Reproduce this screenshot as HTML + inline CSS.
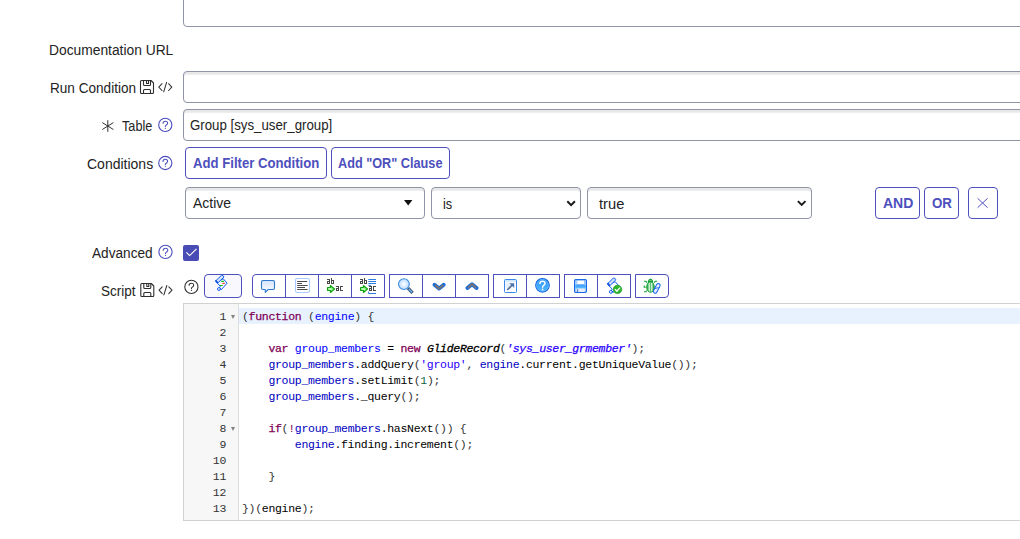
<!DOCTYPE html>
<html><head><meta charset="utf-8">
<style>
*{box-sizing:border-box;margin:0;padding:0}
html,body{width:1020px;height:539px;overflow:hidden;background:#fff}
body{position:relative;font-family:"Liberation Sans",sans-serif;font-size:14px;color:#232323}
.abs{position:absolute}
.lbl{position:absolute;white-space:nowrap;font-size:14px;line-height:16px;color:#232323}
.inp{position:absolute;left:183px;width:860px;height:32px;border:1px solid #9094a6;border-radius:4px;background:#fff;box-shadow:inset 0 2px 0 #e8e8e9,inset 0 3px 0 #eeeeef;font-size:14px;line-height:16px;white-space:nowrap}
.inp span,.sel span,.btn span{position:absolute;white-space:nowrap}
.btn{position:absolute;height:32px;border:1px solid #4d50bd;border-radius:4px;color:#4d50bd;font-weight:bold;font-size:14px;line-height:16px;background:#fff}
.sel{position:absolute;height:32px;border:1px solid #9094a6;border-radius:4px;background:#fff;box-shadow:inset 0 2px 0 #e8e8e9,inset 0 3px 0 #eeeeef;font-size:14px;line-height:16px}
svg{position:absolute;overflow:visible}
.tb{position:absolute;top:274px;height:24px;border:1px solid #4d50bd;background:#fff}
.tbd{position:absolute;top:274px;height:24px;width:1px;background:#4d50bd}
#ed{position:absolute;left:183px;top:303px;width:860px;height:218px;border:1px solid #d1d1d1;background:#fff}
#gut{position:absolute;left:0;top:0;width:55px;height:216px;background:#f7f7f7;border-right:1px solid #ddd}
#al{position:absolute;left:55px;top:4px;width:810px;height:16px;background:#e8f2ff}
.ln{position:absolute;left:0;width:42px;margin-top:1px;text-align:right;font-family:"Liberation Mono",monospace;font-size:11.5px;letter-spacing:-0.3px;line-height:16px;color:#333}
.cl{position:absolute;left:58px;margin-top:1px;font-family:"Liberation Mono",monospace;font-size:11.5px;letter-spacing:-0.3px;line-height:16px;white-space:pre;color:#000}
.k{color:#7f0055;-webkit-text-stroke:0.25px #7f0055}.f{color:#00f}.v{color:#0000c0}.s{color:#2a00ff}.p{color:#333}
.gi{font-style:italic;-webkit-text-stroke:0.3px #000}.si{font-style:italic;color:#2a00ff;-webkit-text-stroke:0.25px #2a00ff}
.fold{position:absolute;left:46.5px;margin-top:0.2px;width:0;height:0;border-left:2.6px solid transparent;border-right:2.6px solid transparent;border-top:4px solid #808080}
</style></head><body>
<!-- top textarea bottom -->
<div class="abs" style="left:183px;top:-10px;width:860px;height:37px;border:1px solid #9094a6;border-radius:4px"></div>

<div class="lbl" id="l1" style="transform:scaleX(0.986);transform-origin:0 0;left:49px;top:42px">Documentation URL</div>
<div class="lbl" id="l2" style="transform:scaleX(0.97);transform-origin:0 0;left:50px;top:80px">Run Condition</div>
<div class="inp" style="top:71px"></div>
<div class="lbl" id="l3" style="transform:scaleX(0.906);transform-origin:0 0;left:122px;top:118px">Table</div>
<div class="inp" style="top:109px"><span id="t1" style="transform:scaleX(0.947);transform-origin:0 0;left:6px;top:7px">Group [sys_user_group]</span></div>
<div class="lbl" id="l4" style="left:87px;top:156px">Conditions</div>

<div class="btn" style="left:185px;top:147px;width:142px"><span id="b1" style="transform:scaleX(0.939);transform-origin:0 0;left:7px;top:7px">Add Filter Condition</span></div>
<div class="btn" style="left:331px;top:147px;width:119px"><span id="b2" style="transform:scaleX(0.907);transform-origin:0 0;left:6px;top:7px">Add "OR" Clause</span></div>

<div class="sel" style="left:185px;top:187px;width:240px"><span id="s1" style="left:7px;top:7px">Active</span></div>
<div class="sel" style="left:431px;top:187px;width:150px"><span id="s2" style="transform:scaleX(0.91);transform-origin:0 0;left:11px;top:8px">is</span></div>
<div class="sel" style="left:587px;top:187px;width:225px"><span id="s3" style="transform:scaleX(1.05);transform-origin:0 0;left:11px;top:8px">true</span></div>
<div class="btn" style="left:875px;top:187px;width:45px"><span id="b3" style="left:7px;top:7px">AND</span></div>
<div class="btn" style="left:924px;top:187px;width:35px"><span id="b4" style="transform:scaleX(0.95);transform-origin:0 0;left:7px;top:7px">OR</span></div>
<div class="btn" style="left:968px;top:187px;width:30px"></div>

<div class="lbl" id="l5" style="transform:scaleX(0.974);transform-origin:0 0;left:92px;top:245px">Advanced</div>
<div class="abs" style="left:183px;top:245px;width:16px;height:16px;background:#4a4cb5;border-radius:2px"></div>
<div class="lbl" id="l6" style="transform:scaleX(0.964);transform-origin:0 0;left:101px;top:283px">Script</div>

<!-- toolbar -->
<div class="tb" style="left:204px;width:38px;border-radius:4px;background:#f9f9fd"></div>
<div class="tb" style="left:252px;width:133px;border-radius:4px 0 0 4px"></div>
<div class="tbd" style="left:285px"></div><div class="tbd" style="left:318px"></div><div class="tbd" style="left:351px"></div>
<div class="tb" style="left:389px;width:100px"></div>
<div class="tbd" style="left:422px"></div><div class="tbd" style="left:455px"></div>
<div class="tb" style="left:493px;width:67px"></div>
<div class="tbd" style="left:526px"></div>
<div class="tb" style="left:564px;width:67px"></div>
<div class="tbd" style="left:597px"></div>
<div class="tb" style="left:635px;width:34px;border-radius:0 4px 4px 0"></div>

<!-- editor -->
<div id="ed"><div id="al"></div><div id="gut"></div>
<div class="ln" style="top:4px">1</div><div class="cl" style="top:4px"><span class="p">(</span><span class="k">function</span> <span class="p">(</span><span class="f">engine</span><span class="p">) {</span></div>
<div class="fold" style="top:11px"></div>
<div class="ln" style="top:20px">2</div><div class="cl" style="top:20px"></div>
<div class="ln" style="top:36px">3</div><div class="cl" style="top:36px">    <span class="k">var</span> <span class="f">group_members</span> = <span class="k">new</span> <span class="gi">GlideRecord</span><span class="p">(</span><span class="si">'sys_user_grmember'</span><span class="p">);</span></div>
<div class="ln" style="top:52px">4</div><div class="cl" style="top:52px">    <span class="v">group_members</span>.addQuery<span class="p">(</span><span class="s">'group'</span><span class="p">,</span> <span class="v">engine</span>.current.getUniqueValue<span class="p">());</span></div>
<div class="ln" style="top:68px">5</div><div class="cl" style="top:68px">    <span class="v">group_members</span>.setLimit<span class="p">(</span><span style="color:#164">1</span><span class="p">);</span></div>
<div class="ln" style="top:84px">6</div><div class="cl" style="top:84px">    <span class="v">group_members</span>._query<span class="p">();</span></div>
<div class="ln" style="top:100px">7</div><div class="cl" style="top:100px"></div>
<div class="ln" style="top:116px">8</div><div class="cl" style="top:116px">    <span class="k">if</span><span class="p">(</span><span style="color:#7f0055">!</span><span class="v">group_members</span>.hasNext<span class="p">()) {</span></div>
<div class="fold" style="top:123px"></div>
<div class="ln" style="top:132px">9</div><div class="cl" style="top:132px">        <span class="v">engine</span>.finding.increment<span class="p">();</span></div>
<div class="ln" style="top:148px">10</div><div class="cl" style="top:148px"></div>
<div class="ln" style="top:164px">11</div><div class="cl" style="top:164px">    <span class="p">}</span></div>
<div class="ln" style="top:180px">12</div><div class="cl" style="top:180px"></div>
<div class="ln" style="top:196px">13</div><div class="cl" style="top:196px"><span class="p">})(</span>engine<span class="p">);</span></div>
</div>
<!--ICONS_START--><svg id="ov" width="1020" height="539" viewBox="0 0 1020 539" style="left:0;top:0">
<defs>
<linearGradient id="gb" x1="0" y1="0" x2="0" y2="1"><stop offset="0" stop-color="#d3e4f8"/><stop offset="1" stop-color="#ffffff"/></linearGradient>
<radialGradient id="gm" cx="0.5" cy="0.5" r="0.6"><stop offset="0" stop-color="#ffffff"/><stop offset="1" stop-color="#a9d2ff"/></radialGradient>
<linearGradient id="gh" x1="0" y1="0" x2="0" y2="1"><stop offset="0" stop-color="#2a92fa"/><stop offset="1" stop-color="#4fbaff"/></linearGradient>
<linearGradient id="gs" x1="0" y1="0" x2="0" y2="1"><stop offset="0" stop-color="#3a9dff"/><stop offset="1" stop-color="#62c0ff"/></linearGradient>
<linearGradient id="gg" x1="0" y1="0" x2="1" y2="0"><stop offset="0" stop-color="#0a9a2a"/><stop offset="0.4" stop-color="#d8f8dc"/><stop offset="0.6" stop-color="#d8f8dc"/><stop offset="1" stop-color="#0a9a2a"/></linearGradient>
<g id="floppy" fill="none" stroke="#2e2e2e" stroke-width="1.1" stroke-linejoin="round">
<path d="M0.5 1.5 Q0.5 0.5 1.5 0.5 H11 L13.5 3 V12.5 Q13.5 13.5 12.5 13.5 H1.5 Q0.5 13.5 0.5 12.5 Z"/>
<path d="M3.5 0.5 V4.5 Q3.5 5.5 4.5 5.5 H9.5 Q10.5 5.5 10.5 4.5 V0.5"/>
<path d="M6.5 0.5 V3.5 H8.5 V0.5"/>
<path d="M3.5 13.5 V10.5 Q3.5 9.5 4.5 9.5 H9.5 Q10.5 9.5 10.5 10.5 V13.5"/>
</g>
<g id="code" fill="none" stroke="#333" stroke-width="1.05" stroke-linecap="round" stroke-linejoin="round">
<path d="M3.7 1.5 L0.5 4.9 L3.7 8.3"/><path d="M8.3 0.2 L5.4 9.6"/><path d="M10.3 1.5 L13.5 4.9 L10.3 8.3"/>
</g>
<g id="help" fill="none" stroke-width="1.1">
<circle cx="0" cy="0" r="6.6"/>
<path d="M-2.3 -1.6 Q-2.2 -3.7 0 -3.7 Q2.3 -3.7 2.3 -1.7 Q2.3 -0.5 1 0.2 Q0 0.8 0 1.7" stroke-linecap="round"/>
<circle cx="0" cy="3.5" r="0.55" stroke="none" fill="currentColor"/>
</g>
<g id="scroll" fill="none" stroke="#1560f2" stroke-width="1" stroke-linejoin="round" stroke-linecap="round">
<path d="M1.7 7.4 L5.8 11.7 L5.1 13 L6.7 15.2 L12.5 8.6 L9.1 4.6 Z" fill="#f6f9ff"/>
<path d="M1.5 6 L6.9 0.8 Q8.9 0.3 9.5 2.4 L3.5 8.2 Q1.5 8.4 1.5 6 Z" fill="#d3e3fb"/>
<path d="M1.6 6.3 L2.9 7.9" stroke="#0f4fe0" stroke-width="1.6"/>
<circle cx="4.5" cy="14.4" r="1.5" fill="#eef3ff"/>
</g>
<g id="garrow"><path d="M0.5 2.6 H3.4 V0.5 L7.6 4 L3.4 7.5 V5.4 H0.5 Z" fill="#7af07a" stroke="#12a512" stroke-width="1.1" stroke-linejoin="round"/><path d="M1.4 3.6 H4.3 M1.4 4.3 H5.2" fill="none" stroke="#d8ffd0" stroke-width="0.8"/></g>
</defs>
<!-- label icons -->
<use href="#floppy" x="140" y="80"/><use href="#code" x="158.3" y="82.2"/>
<use href="#floppy" x="140.3" y="283"/><use href="#code" x="158.5" y="285.3"/>
<g stroke="#333" stroke-width="1" fill="none"><path d="M107.8 120.2 V131.8 M102.3 122.6 L113.4 129.5 M102.3 129.5 L113.4 122.6"/></g>
<g color="#4c4fbe" stroke="#4c4fbe"><use href="#help" x="165.3" y="124.9"/><use href="#help" x="165.3" y="163"/><use href="#help" x="165.5" y="251.9"/></g>
<g color="#333" stroke="#333"><use href="#help" x="191.4" y="286.9"/></g>
<!-- selects -->
<path d="M404 200 H412.4 L408.2 205.4 Z" fill="#111"/>
<path d="M567.3 201.3 L571.1 205.1 L574.9 201.3" fill="none" stroke="#1a1a1a" stroke-width="2"/>
<path d="M797.9 201.1 L801.7 204.9 L805.5 201.1" fill="none" stroke="#1a1a1a" stroke-width="2"/>
<path d="M977.6 198.3 L987.6 207.7 M987.6 198.3 L977.6 207.7" stroke="#4d50bd" stroke-width="1" fill="none"/>
<path d="M186.4 252.4 L189.6 255.6 L196.5 248.9" stroke="#fff" stroke-width="1.1" fill="none"/>
<!-- toolbar icons -->
<use href="#scroll" x="214.5" y="274.6"/>
<path d="M221.2 281.4 h2.8 M220 285.5 h2.8" stroke="#19c219" stroke-width="1.1"/><path d="M222.3 283.4 h2.5" stroke="#f03a1a" stroke-width="1.1"/>
<!-- comment -->
<path d="M263 280.5 H273 Q274.5 280.5 274.5 282 V288 Q274.5 289.5 273 289.5 H268.2 L265.3 292.4 L265.3 289.5 H263 Q261.5 289.5 261.5 288 V282 Q261.5 280.5 263 280.5 Z" fill="url(#gb)" stroke="#2b78d0" stroke-width="1.1" stroke-linejoin="round"/>
<!-- align -->
<rect x="295.5" y="278.5" width="14" height="14" rx="1.8" fill="#fff" stroke="#a9c9ff" stroke-width="1.1"/>
<path d="M297.2 281.5 H307.2 M297.2 283.5 H302 M297.2 285.5 H307.6 M297.2 287.5 H305 M297.2 289.5 H307.6" stroke="#4a4a4a" stroke-width="1"/>
<!-- ab ac -->
<path d="M327 279h1v1h-1zM328 279h1v1h-1zM329 279h1v1h-1zM329 280h1v1h-1zM327 281h1v1h-1zM328 281h1v1h-1zM329 281h1v1h-1zM327 282h1v1h-1zM329 282h1v1h-1zM327 283h1v1h-1zM328 283h1v1h-1zM329 283h1v1h-1zM331 278h1v1h-1zM331 279h1v1h-1zM331 280h1v1h-1zM332 280h1v1h-1zM333 280h1v1h-1zM331 281h1v1h-1zM333 281h1v1h-1zM331 282h1v1h-1zM333 282h1v1h-1zM331 283h1v1h-1zM332 283h1v1h-1zM333 283h1v1h-1zM336 286h1v1h-1zM337 286h1v1h-1zM338 286h1v1h-1zM338 287h1v1h-1zM336 288h1v1h-1zM337 288h1v1h-1zM338 288h1v1h-1zM336 289h1v1h-1zM338 289h1v1h-1zM336 290h1v1h-1zM337 290h1v1h-1zM338 290h1v1h-1zM340 286h1v1h-1zM341 286h1v1h-1zM342 286h1v1h-1zM340 287h1v1h-1zM340 288h1v1h-1zM340 289h1v1h-1zM340 290h1v1h-1zM341 290h1v1h-1zM342 290h1v1h-1zM360 279h1v1h-1zM361 279h1v1h-1zM362 279h1v1h-1zM362 280h1v1h-1zM360 281h1v1h-1zM361 281h1v1h-1zM362 281h1v1h-1zM360 282h1v1h-1zM362 282h1v1h-1zM360 283h1v1h-1zM361 283h1v1h-1zM362 283h1v1h-1zM364 278h1v1h-1zM364 279h1v1h-1zM364 280h1v1h-1zM365 280h1v1h-1zM366 280h1v1h-1zM364 281h1v1h-1zM366 281h1v1h-1zM364 282h1v1h-1zM366 282h1v1h-1zM364 283h1v1h-1zM365 283h1v1h-1zM366 283h1v1h-1zM369 286h1v1h-1zM370 286h1v1h-1zM371 286h1v1h-1zM371 287h1v1h-1zM369 288h1v1h-1zM370 288h1v1h-1zM371 288h1v1h-1zM369 289h1v1h-1zM371 289h1v1h-1zM369 290h1v1h-1zM370 290h1v1h-1zM371 290h1v1h-1zM373 286h1v1h-1zM374 286h1v1h-1zM375 286h1v1h-1zM373 287h1v1h-1zM373 288h1v1h-1zM373 289h1v1h-1zM373 290h1v1h-1zM374 290h1v1h-1zM375 290h1v1h-1z" fill="#484848" shape-rendering="crispEdges"/>
<use href="#garrow" x="327" y="285"/>
<use href="#garrow" x="360" y="285"/>
<path d="M368.3 279.5 H376 M368.3 281.5 H376 M368.3 283.5 H376 M368.3 285.4 H371 M368.6 293.5 H376" stroke="#2e7de0" stroke-width="1"/>
<path d="M368.6 291.5 V293.5" stroke="#2e7de0" stroke-width="1"/>
<!-- magnifier -->
<path d="M408 288.2 L412.6 292.8" stroke="#3a4a5a" stroke-width="3.2" stroke-linecap="butt"/>
<path d="M408.6 288.8 L412.2 292.4" stroke="#62abf2" stroke-width="1.6"/>
<circle cx="403.9" cy="284.1" r="5.4" fill="url(#gm)" stroke="#3d8edb" stroke-width="1.1"/>
<!-- chevrons -->
<path d="M434.5 284.8 L439.1 288.6 L443.7 284.8" fill="none" stroke="#1c6ddc" stroke-width="3.9" stroke-linejoin="round" stroke-linecap="round"/>
<path d="M434.9 285.1 L439.1 288.6 L443.3 285.1" fill="none" stroke="#747474" stroke-width="2"/>
<path d="M467.4 288 L472 284.2 L476.6 288" fill="none" stroke="#1c6ddc" stroke-width="3.9" stroke-linejoin="round" stroke-linecap="round"/>
<path d="M467.8 287.7 L472 284.2 L476.2 287.7" fill="none" stroke="#747474" stroke-width="2"/>
<!-- popout -->
<rect x="504.5" y="279.5" width="12" height="13" rx="1" fill="#fff" stroke="#3a86ea" stroke-width="1"/>
<rect x="505" y="280" width="11" height="1.8" fill="#cfe6ff"/>
<rect x="505.5" y="282.5" width="6" height="6" fill="#e6f0fc"/>
<path d="M507.2 290 L512.6 284.6" stroke="#5a7296" stroke-width="1.7"/>
<path d="M509.3 283.2 H514.2 V288.1 Z" fill="#4a72b4"/>
<!-- help -->
<circle cx="542.5" cy="285.3" r="6.8" fill="url(#gh)" stroke="#1260e0" stroke-width="1.1"/>
<circle cx="542.5" cy="285.3" r="5.9" fill="none" stroke="#6fc0ff" stroke-width="0.7"/>
<path d="M539.9 283.5 Q540 281.2 542.5 281.2 Q545 281.2 545 283.3 Q545 284.5 543.7 285.3 Q542.6 286 542.6 287.3" fill="none" stroke="#fff" stroke-width="1.5" stroke-linecap="round"/>
<circle cx="542.6" cy="289.4" r="0.9" fill="#fff"/>
<!-- save blue -->
<rect x="574.6" y="279.6" width="11.8" height="12.8" rx="1.2" fill="#cfe8ff" stroke="#1768e6" stroke-width="1.2"/>
<rect x="576.9" y="280.2" width="7.4" height="4.2" fill="#fff" stroke="#5aa2f2" stroke-width="0.6"/>
<rect x="575.3" y="284.7" width="10.4" height="3.9" fill="url(#gs)"/>
<rect x="577" y="288.6" width="7.6" height="3.4" fill="#e6edf8"/>
<rect x="577.2" y="289" width="1" height="3" fill="#4a78c8"/>
<!-- script check -->
<use href="#scroll" x="606.4" y="277.4"/>
<circle cx="617.5" cy="289.4" r="4.2" fill="#2bb52b" stroke="#1d9a1d" stroke-width="0.7"/>
<path d="M615 289.3 L616.9 291.3 L620 287.6" stroke="#fff" stroke-width="1.4" fill="none"/>
<!-- bug -->
<g stroke="#12a332" stroke-width="1.1" fill="none"><path d="M644 281.3 h1.8 l1.4 1.2 M644.2 285.6 v1.6 h1.6 M644 291.7 h1.8 l1.2 -1.1 M657.2 281.3 h-1.8 l-1.4 1.2"/></g>
<ellipse cx="650.5" cy="287" rx="3.8" ry="5.3" fill="url(#gg)" stroke="#0d9a2c" stroke-width="0.9"/>
<path d="M650.5 282.5 V292" stroke="#2aa84a" stroke-width="0.7"/>
<path d="M648.2 282 Q648.4 279 650.5 279 Q652.6 279 652.8 282 Z" fill="#16a838" stroke="#0d8a2c" stroke-width="0.7"/>
<path d="M649.3 280.4 h2.4" stroke="#7fe09a" stroke-width="0.8"/>
<path d="M655.2 291.4 L658.3 285.4" stroke="#1560f2" stroke-width="4.6" stroke-linecap="round"/><path d="M655.2 291.4 L658.3 285.4" stroke="#e4edff" stroke-width="2.7" stroke-linecap="round"/><path d="M654.6 288.6 L658.6 287.6" stroke="#1560f2" stroke-width="0.9"/>
</svg>
<!--ICONS_END-->
</body></html>
